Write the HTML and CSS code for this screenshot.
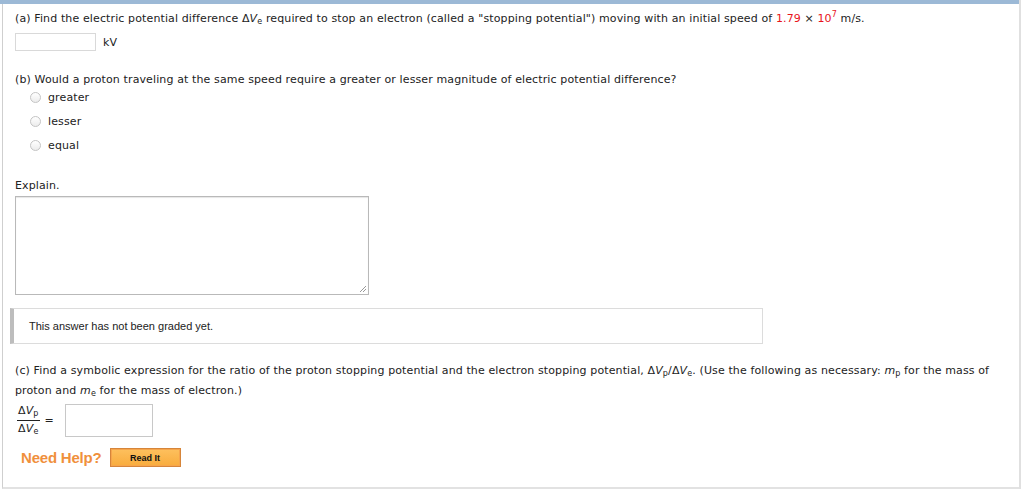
FILE: index.html
```html
<!DOCTYPE html>
<html>
<head>
<meta charset="utf-8">
<link rel="stylesheet" href="styles.css">
</head>
<body>
<div class="page">
  <div class="topbar"></div>
  <div class="q">
    <p class="line a">(a) Find the electric potential difference &Delta;<i>V</i><sub>e</sub> required to stop an electron (called a "stopping potential") moving with an initial speed of <span class="red">1.79</span> &times; <span class="red">10<sup>7</sup></span> m/s.</p>
    <div class="answer-row">
      <span class="input small"></span>
      <span class="unit">kV</span>
    </div>

    <p class="line b">(b) Would a proton traveling at the same speed require a greater or lesser magnitude of electric potential difference?</p>
    <ul class="radios">
      <li><span class="radio"></span>greater</li>
      <li><span class="radio"></span>lesser</li>
      <li><span class="radio"></span>equal</li>
    </ul>

    <p class="line explain">Explain.</p>
    <div class="textarea"><span class="grip"></span></div>

    <div class="graded">This answer has not been graded yet.</div>

    <p class="para c">(c) Find a symbolic expression for the ratio of the proton stopping potential and the electron stopping potential, &Delta;<i>V</i><sub>p</sub>/&Delta;<i>V</i><sub>e</sub>. (Use the following as necessary: <i>m</i><sub>p</sub> for the mass of proton and <i>m</i><sub>e</sub> for the mass of electron.)</p>

    <div class="frac-row">
      <span class="frac">
        <span class="num">&Delta;<i>V</i><sub>p</sub></span>
        <span class="den">&Delta;<i>V</i><sub>e</sub></span>
      </span>
      <span class="eq">=</span>
      <span class="input big"></span>
    </div>

    <div class="help-row">
      <span class="help">Need Help?</span>
      <span class="btn"><span class="btn-in">Read It</span></span>
    </div>
  </div>
</div>
</body>
</html>
```

FILE: styles.css
```css
* { box-sizing: border-box; }
html, body { margin: 0; padding: 0; background: #fff; }
body {
  font-family: "DejaVu Sans", Verdana, sans-serif;
  font-size: 11px;
  letter-spacing: 0.12px;
  color: #222;
}
.page {
  width: 1021px;
  border-right: 2px solid #e0e0e0;
}
.topbar {
  height: 4px;
  background: #9cb9d6;
}
.q {
  margin-left: 2px;
  border-left: 1px solid #cfcfcf;
  border-bottom: 2px solid #e2e2e2;
  padding: 7px 0 20px 12px;
}
p { margin: 0; }
.line { line-height: 16px; white-space: nowrap; }
sub, sup { font-size: 8px; line-height: 1; }
sub { vertical-align: -2px; }
sup { vertical-align: 5px; }
i { font-style: italic; }
.red { color: #e8141b; }

.answer-row {
  display: flex;
  align-items: center;
  margin-top: 6px;
  height: 18px;
}
.input {
  display: inline-block;
  border: 1px solid #d9d9d9;
  background: #fff;
}
.input.small { width: 81px; height: 18px; }
.unit { margin-left: 7px; }

.b { margin-top: 21px; }
.radios {
  list-style: none;
  margin: 0;
  padding: 0 0 0 15px;
  display: flex;
  flex-direction: column;
  gap: 4px;
}
.radios li {
  height: 20px;
  display: flex;
  align-items: center;
  margin-top: -1px;
  margin-bottom: 1px;
}
.radio {
  width: 11px;
  height: 11px;
  border-radius: 50%;
  border: 1px solid #c4c4c4;
  background: linear-gradient(#ffffff, #ececec);
  margin-right: 7px;
}
.explain { margin-top: 22px; }
.textarea {
  margin-top: 2px;
  width: 354px;
  height: 99px;
  border: 1px solid #b9b9b9;
  box-shadow: inset 0 1px 1px #e6e6e6;
  display: flex;
  justify-content: flex-end;
  align-items: flex-end;
  padding: 2px;
}
.grip {
  width: 6px;
  height: 6px;
  background: linear-gradient(135deg, transparent 45%, #999 45%, #999 55%, transparent 55%, transparent 70%, #999 70%, #999 80%, transparent 80%);
}
.graded {
  margin-top: 13px;
  margin-left: -5px;
  width: 753px;
  height: 36px;
  border: 1px solid #dcdcdc;
  border-left: 4px solid #bdbdbd;
  padding-left: 15px;
  display: flex;
  align-items: center;
  font-family: "Liberation Sans", Arial, sans-serif;
  font-size: 11px;
  letter-spacing: 0;
  color: #222;
}
.para { line-height: 20px; }
.c { margin-top: 17px; width: 1000px; }

.frac-row {
  display: flex;
  align-items: center;
  margin-top: 3px;
  padding-left: 2px;
}
.frac {
  display: inline-flex;
  flex-direction: column;
  align-items: center;
  line-height: 12px;
}
.frac .num {
  border-bottom: 1px solid #222;
  padding: 0 1px 2px;
}
.frac .den { padding-top: 2px; }
.eq { margin-left: 5px; margin-right: 11px; }
.input.big { width: 88px; height: 33px; border-color: #c8c8c8; }

.help-row {
  display: flex;
  align-items: center;
  margin-top: 11px;
  padding-left: 6px;
  height: 19px;
}
.help {
  font-family: "Liberation Sans", Arial, sans-serif;
  font-weight: bold;
  font-size: 15px;
  letter-spacing: -0.2px;
  color: #f0903c;
}
.btn {
  margin-left: 8px;
  width: 71px;
  height: 19px;
  border: 1px solid #d6853a;
  background: #f6a54c;
  padding: 1px;
  display: flex;
}
.btn-in {
  flex: 1;
  background: linear-gradient(#fdbf5c, #f9ad3f);
  display: flex;
  align-items: center;
  justify-content: center;
  font-family: "Liberation Sans", Arial, sans-serif;
  font-weight: bold;
  font-size: 9px;
  letter-spacing: 0;
  color: #111;
}
```
